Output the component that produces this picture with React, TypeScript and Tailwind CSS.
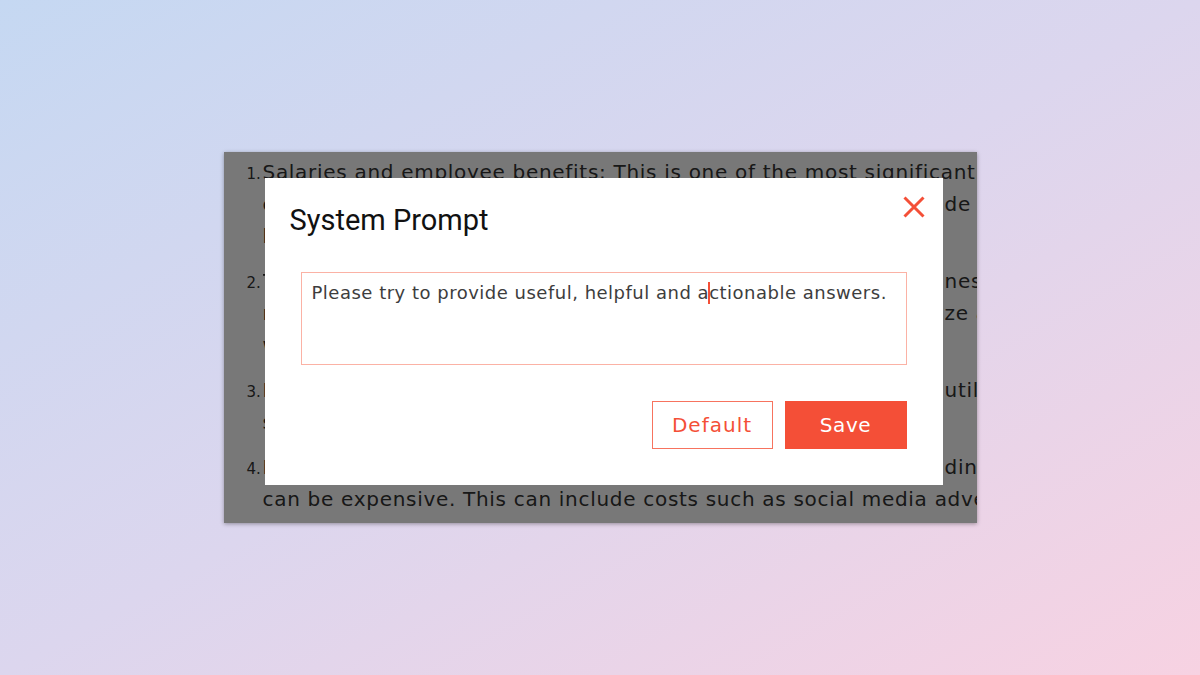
import React from "react";

type Line = string | [string, string];

const items: { n: string; lines: Line[] }[] = [
  {
    n: "1.",
    lines: [
      "Salaries and employee benefits: This is one of the most significant",
      ["costs for most businesses, and employee benefits can inclu", "de"],
      "health insurance, retirement plans and paid time off.",
    ],
  },
  {
    n: "2.",
    lines: [
      ["Technology and software: In today's digital age, every busi", "ness"],
      ["needs technology to operate efficiently, and to organi", "ze a"],
      "wide range of processes.",
    ],
  },
  {
    n: "3.",
    lines: [
      ["Rent and utilities: Businesses need a place to operate and ", "utilities"],
      "such as electricity, water and internet.",
    ],
  },
  {
    n: "4.",
    lines: [
      ["Marketing and advertising: Promoting a business and buil", "ding"],
      "can be expensive. This can include costs such as social media advertising,",
      "online advertising, and public relations campaigns.",
    ],
  },
];

export default function App() {
  return (
    <div className="w-[1200px] h-[675px] flex items-center justify-center bg-linear-to-br from-[#c5d8f2] via-[#dcd6ee] to-[#f7d2e2]">
      <div className="relative w-[753px] h-[371px] overflow-hidden bg-white shadow-[0_1px_4px_rgba(0,0,0,0.35)]">
        <ol
          className="pt-[4px] pl-[23px] flex flex-col gap-[13px] text-[#333] text-[20px] leading-[32px] tracking-[0.7px]"
          style={{ fontFamily: '"DejaVu Sans", sans-serif' }}
        >
          {items.map((it) => (
            <li key={it.n} className="flex items-baseline">
              <span className="w-[12px] shrink-0 text-[15px] tracking-normal text-right">{it.n}</span>
              <div className="ml-[4px] flex flex-col min-w-0">
                {it.lines.map((l, i) =>
                  typeof l === "string" ? (
                    <div key={i} className="whitespace-nowrap">
                      {l}
                    </div>
                  ) : (
                    <div key={i} className="whitespace-nowrap flex">
                      <span className="w-[682px] shrink-0 overflow-hidden">{l[0]}</span>
                      <span>{l[1]}</span>
                    </div>
                  )
                )}
              </div>
            </li>
          ))}
        </ol>

        <div className="absolute inset-0 bg-black/[0.53] pl-[41px] pt-[26px]">
          <div className="relative w-[678px] h-[307px] bg-white flex flex-col">
            <div
              className="pl-[25px] pt-[26px] text-[29px] leading-[32px] text-[#111]"
              style={{ fontFamily: "Roboto, sans-serif" }}
            >
              System Prompt
            </div>
            <button className="absolute top-[18px] right-[18px] w-[22px] h-[22px]">
              <svg width="22" height="22" viewBox="0 0 22 22">
                <path d="M1.5 1.5 L20.5 20.5 M20.5 1.5 L1.5 20.5" stroke="#f44f37" strokeWidth="3" strokeLinecap="butt" />
              </svg>
            </button>
            <div className="px-[36px] mt-[36px]" style={{ fontFamily: '"DejaVu Sans", sans-serif' }}>
              <div className="h-[93px] border border-[#fbb2a5] px-[10px] pt-[8px] text-[18px] leading-[24px] tracking-[0.5px] text-[#3d3d3d]">
                Please try to provide useful, helpful and a
                <span className="inline-block w-[2px] h-[22px] bg-[#f44f37] align-[-5px] -mx-[1px]"></span>
                ctionable answers.
              </div>
              <div className="mt-[36px] flex justify-end gap-[12px]">
                <button className="w-[121px] h-[48px] border border-[#f7735e] text-[#f44f37] text-[20px] tracking-[1px]">
                  Default
                </button>
                <button className="w-[122px] h-[48px] bg-[#f44f37] text-white text-[20px] tracking-[0.6px]">
                  Save
                </button>
              </div>
            </div>
          </div>
        </div>
      </div>
    </div>
  );
}
